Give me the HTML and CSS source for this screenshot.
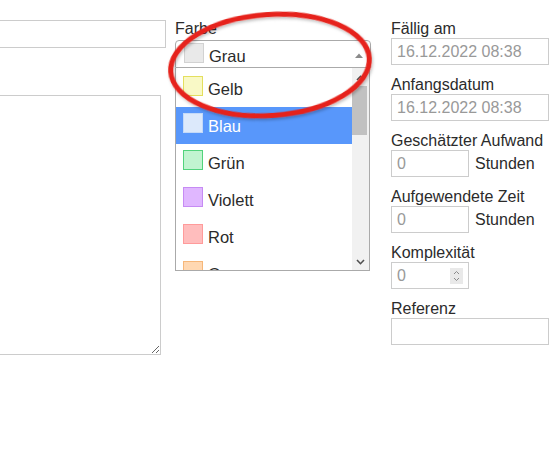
FILE: index.html
```html
<!DOCTYPE html>
<html lang="de">
<head>
<meta charset="utf-8">
<title>Aufgabe bearbeiten</title>
<link rel="stylesheet" href="styles.css">
</head>
<body>
<div class="page">
  <div class="col col-main">
    <input class="title-input" type="text">
    <textarea class="desc"></textarea>
  </div>

  <div class="col col-color">
    <label class="lbl">Farbe</label>
    <div class="select">
      <span class="swatch sw-grau"></span>
      <span class="opt-text">Grau</span>
      <svg class="sel-arrow" width="8" height="5" viewBox="0 0 8 5"><polygon points="0,5 4,0.5 8,5" fill="#8a8a8a"/></svg>
    </div>
    <div class="dropdown">
      <ul class="options">
        <li class="opt"><span class="swatch sw-gelb"></span><span class="opt-text">Gelb</span></li>
        <li class="opt active"><span class="swatch sw-blau"></span><span class="opt-text">Blau</span></li>
        <li class="opt"><span class="swatch sw-gruen"></span><span class="opt-text">Grün</span></li>
        <li class="opt"><span class="swatch sw-violett"></span><span class="opt-text">Violett</span></li>
        <li class="opt"><span class="swatch sw-rot"></span><span class="opt-text">Rot</span></li>
        <li class="opt"><span class="swatch sw-orange"></span><span class="opt-text">Orange</span></li>
      </ul>
      <div class="scrollbar">
        <span class="sb-btn up"><svg width="9" height="6" viewBox="0 0 9 6"><polyline points="1,5 4.5,1.3 8,5" fill="none" stroke="#505050" stroke-width="1.6"/></svg></span>
        <span class="sb-thumb"></span>
        <span class="sb-btn down"><svg width="9" height="6" viewBox="0 0 9 6"><polyline points="1,1 4.5,4.7 8,1" fill="none" stroke="#505050" stroke-width="1.6"/></svg></span>
      </div>
    </div>
  </div>

  <div class="col col-meta">
    <div class="field">
      <label class="lbl">Fällig am</label>
      <input class="inp" type="text" value="16.12.2022 08:38" readonly>
    </div>
    <div class="field">
      <label class="lbl">Anfangsdatum</label>
      <input class="inp" type="text" value="16.12.2022 08:38" readonly>
    </div>
    <div class="field">
      <label class="lbl">Geschätzter Aufwand</label>
      <div class="inp-row">
        <input class="inp inp-short" type="text" value="0" readonly>
        <span class="unit">Stunden</span>
      </div>
    </div>
    <div class="field">
      <label class="lbl">Aufgewendete Zeit</label>
      <div class="inp-row">
        <input class="inp inp-short" type="text" value="0" readonly>
        <span class="unit">Stunden</span>
      </div>
    </div>
    <div class="field">
      <label class="lbl">Komplexität</label>
      <div class="spin-box">
        <input class="inp inp-bare" type="text" value="0" readonly>
        <svg class="spinner" width="13" height="16" viewBox="0 0 13 16">
          <rect x="0" y="0" width="13" height="16" fill="#e9e9e9"/>
          <polyline points="4,6 6.5,3.5 9,6" fill="none" stroke="#8a8a8a" stroke-width="1"/>
          <polyline points="4,10 6.5,12.5 9,10" fill="none" stroke="#8a8a8a" stroke-width="1"/>
        </svg>
      </div>
    </div>
    <div class="field">
      <label class="lbl">Referenz</label>
      <input class="inp" type="text" value="">
    </div>
  </div>
</div>

<svg class="annot" width="550" height="450" viewBox="0 0 550 450">
  <defs>
    <filter id="sh" x="-20%" y="-20%" width="140%" height="140%">
      <feDropShadow dx="1" dy="2" stdDeviation="1.5" flood-color="#000" flood-opacity="0.25"/>
    </filter>
  </defs>
  <ellipse cx="270" cy="65" rx="99.5" ry="50.5" fill="none" stroke="#e6231a" stroke-width="5" transform="rotate(-4 270 65)" filter="url(#sh)"/>
</svg>
</body>
</html>
```

FILE: styles.css
```css
* {
  box-sizing: border-box;
}

html,
body {
  margin: 0;
  padding: 0;
  background: #fff;
}

body {
  font-family: "Liberation Sans", Arial, sans-serif;
  color: #333;
  width: 550px;
  height: 450px;
  overflow: hidden;
  position: relative;
}

.page {
  display: flex;
  align-items: flex-start;
  padding-top: 20px;
}

.col {
  flex: none;
}

/* left column (partly scrolled out of view) */
.col-main {
  width: 200px;
  margin-left: -34px;
  display: flex;
  flex-direction: column;
}

.title-input {
  display: block;
  width: 100%;
  height: 28px;
  border: 1px solid #ccc;
  border-radius: 0;
  outline: none;
}

.desc {
  display: block;
  width: 195px;
  height: 260px;
  margin: 47px 0 0;
  border: 1px solid #ccc;
  border-radius: 0;
  resize: both;
  outline: none;
}

/* colour picker column */
.col-color {
  width: 196px;
  margin-left: 9px;
}

.lbl {
  display: block;
  font-size: 16px;
  line-height: 18px;
  color: #2b2b2b;
}

.col-color .lbl {
  margin-bottom: 2px;
}

.select {
  height: 28px;
  border: 1px solid #aaa;
  border-radius: 4px 4px 0 0;
  display: flex;
  align-items: flex-start;
  padding: 2px 7px 0 8px;
  background: #fff;
}

.sel-arrow {
  margin-left: auto;
  align-self: center;
}

.swatch {
  flex: none;
  width: 20px;
  height: 20px;
  border: 1px solid;
}

.sw-grau { background: #e9e9e9; border-color: #d2d2d2; }
.sw-gelb { background: #f9f9c6; border-color: #e4df5e; }
.sw-blau { background: #dce9fb; border-color: #c3d9f8; }
.sw-gruen { background: #c1f4d0; border-color: #52d37c; }
.sw-violett { background: #e0b7ff; border-color: #c68bf4; }
.sw-rot { background: #ffbdbd; border-color: #ff9b9b; }
.sw-orange { background: #ffd8b2; border-color: #f6b779; }

.opt-text {
  margin: 3px 0 0 5px;
  font-size: 16.5px;
  line-height: 20px;
  color: #2b2b2b;
  white-space: nowrap;
}

.dropdown {
  width: 195px;
  height: 203px;
  border: 1px solid #aaa;
  border-top: none;
  display: flex;
  background: #fff;
}

.options {
  list-style: none;
  margin: 0;
  padding: 2px 0 0;
  flex: 1;
  height: 202px;
  overflow: hidden;
}

.opt {
  height: 37px;
  display: flex;
  align-items: flex-start;
  padding: 6px 0 0 7px;
}

.opt.active {
  background: #5897fb;
}

.opt.active .opt-text {
  color: #fff;
}

.scrollbar {
  flex: none;
  width: 17px;
  height: 202px;
  background: #f1f1f1;
  display: flex;
  flex-direction: column;
}

.sb-btn {
  height: 17px;
  display: flex;
  align-items: center;
  justify-content: center;
}

.sb-btn.up {
  padding-top: 2px;
}

.sb-btn.down {
  margin-top: auto;
  padding-top: 1px;
}

.sb-thumb {
  width: 15px;
  height: 49px;
  margin-top: 1px;
  background: #c1c1c1;
}

/* meta column */
.col-meta {
  width: 158px;
  margin-left: 20px;
}

.field {
  margin-bottom: 11px;
}

.inp {
  display: block;
  width: 100%;
  height: 27px;
  margin: 0;
  border: 1px solid #ccc;
  border-radius: 0;
  padding: 0 5px;
  font: 16px "Liberation Sans", Arial, sans-serif;
  color: #999;
  background: #fff;
  outline: none;
}

.inp-row {
  display: flex;
  align-items: center;
  gap: 6px;
}

.inp-short {
  width: 78px;
  flex: none;
}

.unit {
  font-size: 16px;
  color: #2b2b2b;
}

.spin-box {
  width: 78px;
  height: 27px;
  border: 1px solid #ccc;
  display: flex;
  align-items: center;
  padding-right: 5px;
}

.inp-bare {
  border: none;
  height: 25px;
  flex: 1;
  width: auto;
  min-width: 0;
}

.spinner {
  flex: none;
}

/* annotation overlay */
.annot {
  position: absolute;
  left: 0;
  top: 0;
  pointer-events: none;
}
```
